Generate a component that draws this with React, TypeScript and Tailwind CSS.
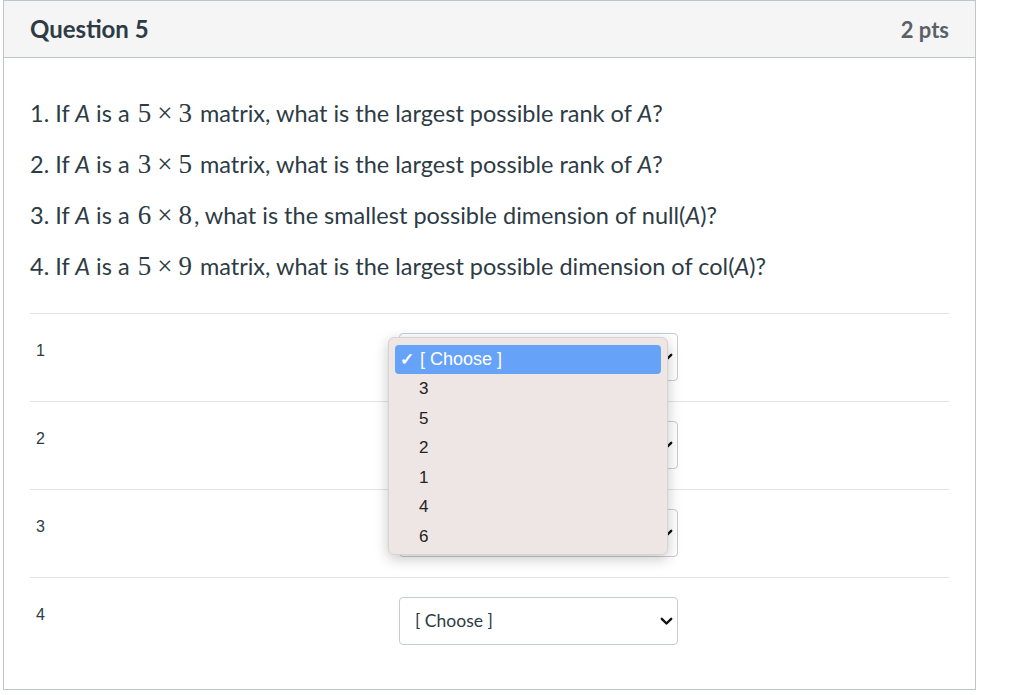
import React from 'react';

const rows = [1, 2, 3, 4];
const options = ['3', '5', '2', '1', '4', '6'];

function Chevron() {
  return (
    <svg width="13" height="9" viewBox="0 0 13 9" className="shrink-0">
      <path d="M1.8 1.8 L6.5 6.5 L11.2 1.8" fill="none" stroke="#111" strokeWidth="2.4" strokeLinecap="round" strokeLinejoin="round" />
    </svg>
  );
}

function Math({ a, b }: { a: string; b: string }) {
  return (
    <span className="mx-[2px] text-[27px] leading-none" style={{ fontFamily: '"Liberation Serif", serif' }}>
      {a}
      <span className="mx-[6px]">×</span>
      {b}
    </span>
  );
}

// rows 1-3 sit under the open menu, so only their chevron edge shows
function SelectBox({ covered }: { covered: boolean }) {
  return (
    <div className="ml-[369px] mt-[19px] flex h-[48px] w-[279px] items-center justify-between rounded-[4px] border border-[#c7cdd1] bg-white pl-[15px] pr-[4px]">
      <span className="text-[17.5px] text-[#2d3b45]">{covered ? '' : '[ Choose ]'}</span>
      <Chevron />
    </div>
  );
}

export default function App() {
  return (
    <div
      className="relative h-[695px] w-[1024px] overflow-hidden bg-white pl-[3px] text-[#2d3b45]"
      style={{ fontFamily: 'Lato, "Noto Sans", sans-serif' }}
    >
      <div className="flex h-[690px] w-[973px] flex-col border border-[#bfc5c9]">
        {/* Header */}
        <div className="flex h-[57px] shrink-0 items-center justify-between border-b border-[#bfc5c9] bg-[#f5f5f5] px-[26px]">
          <span className="text-[24px] font-bold text-[#2d3b45]">Question 5</span>
          <span className="text-[22px] font-bold text-[#5b6168]">2 pts</span>
        </div>

        {/* Body */}
        <div className="flex flex-1 flex-col px-[26px] pt-[30px]">
          <div className="flex flex-col text-[23.5px] text-[#2d3b45]">
            <p className="flex h-[51px] items-center whitespace-pre">
              1. If <i>A</i> is a <Math a="5" b="3" /> matrix, what is the largest possible rank of <i>A</i>?
            </p>
            <p className="flex h-[51px] items-center whitespace-pre">
              2. If <i>A</i> is a <Math a="3" b="5" /> matrix, what is the largest possible rank of <i>A</i>?
            </p>
            <p className="flex h-[51px] items-center whitespace-pre">
              3. If <i>A</i> is a <Math a="6" b="8" />, what is the smallest possible dimension of null(<i>A</i>)?
            </p>
            <p className="flex h-[51px] items-center whitespace-pre">
              4. If <i>A</i> is a <Math a="5" b="9" /> matrix, what is the largest possible dimension of col(<i>A</i>)?
            </p>
          </div>

          {/* Answer rows */}
          <div className="mt-[21px] flex flex-col" style={{ fontFamily: '"Liberation Sans", Arial, sans-serif' }}>
            {rows.map((n, i) => (
              <div
                key={n}
                className={i === 3 ? 'relative h-[112px] border-t border-[#e2e2e2]' : 'relative h-[88px] border-t border-[#e2e2e2]'}
              >
                <span className="absolute left-[6px] top-[25px] text-[16px] text-[#2d3b45]">{n}</span>
                <div style={{ fontFamily: 'Lato, "Noto Sans", sans-serif' }}>
                  <SelectBox covered={i < 3} />
                </div>
              </div>
            ))}
          </div>
        </div>
      </div>

      {/* Open dropdown menu */}
      <div
        className="absolute left-[388px] top-[337px] h-[218px] w-[280px] rounded-[6px] border border-[#d8d2d0] bg-[#ede6e4] px-[6px] pt-[7px] shadow-[0_4px_14px_rgba(0,0,0,0.22)]"
        style={{ fontFamily: '"Liberation Sans", Arial, sans-serif' }}
      >
        <div className="flex h-[29px] items-center gap-[5px] rounded-[4px] bg-[#67a2f9] pl-[3px] text-[18px] text-white">
          <span className="w-[17px] text-center text-[17px] font-bold">✓</span>
          <span>[ Choose ]</span>
        </div>
        <div className="flex flex-col">
          {options.map((o) => (
            <div key={o} className="flex h-[29.5px] items-center pl-[24px] text-[17px] text-[#222]">
              {o}
            </div>
          ))}
        </div>
      </div>
    </div>
  );
}
